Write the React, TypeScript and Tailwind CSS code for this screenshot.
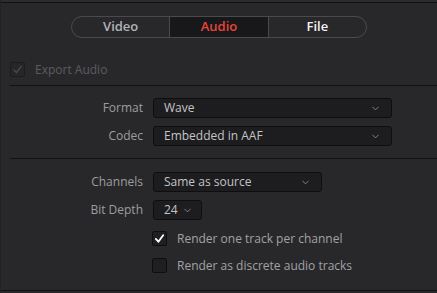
import { ChevronDown } from "lucide-react";

const font = { fontFamily: '"Open Sans", "Liberation Sans", sans-serif' };

function Select({ value, width }: { value: string; width: string }) {
  return (
    <div className={`${width} h-[20px] flex items-center justify-between pl-[10px] pr-[10px] rounded-[3px] border border-[#0e0e10] bg-[#1d1d20] text-[12px] text-[#c4c4c6]`}>
      <span className="leading-none">{value}</span>
      <ChevronDown className="w-[11px] h-[11px] text-[#9a9a9c]" strokeWidth={1.75} />
    </div>
  );
}

function Row({ label, children }: { label: string; children: React.ReactNode }) {
  return (
    <div className="flex items-center">
      <div className="w-[142px] text-right text-[12px] text-[#9d9d9f] leading-none">{label}</div>
      <div className="ml-[10px]">{children}</div>
    </div>
  );
}

function Check({ checked, label, dim }: { checked: boolean; label: string; dim?: boolean }) {
  return (
    <div className="flex items-center">
      <div className={`w-[15px] h-[15px] rounded-[2px] border flex items-center justify-center ${dim ? "border-[#1c1c1f] bg-[#262629]" : "border-[#0e0e10] bg-[#1f1f22]"}`}>
        {checked && (
          <svg viewBox="0 0 12 12" className="w-[11px] h-[11px]">
            <path d="M2 6.5 L4.8 9.5 L10 2.5" fill="none" stroke={dim ? "#4e4e52" : "#ffffff"} strokeWidth={dim ? 1.3 : 2} strokeLinecap="round" strokeLinejoin="round" />
          </svg>
        )}
      </div>
      <span className={`ml-[10px] text-[12px] leading-none ${dim ? "text-[#5c5c60]" : "text-[#a2a2a4]"}`}>{label}</span>
    </div>
  );
}

export default function App() {
  return (
    <div className="w-[437px] h-[293px] bg-[#28282b] overflow-hidden border-l border-[#222225]" style={font}>
      <div className="h-[2px] bg-[#2c2c2f]" />
      <div className="h-px bg-[#111113]" />

      <div className="flex justify-center mt-[13px]">
        <div className="w-[296px] h-[22px] flex rounded-full border border-[#4a4a4e] overflow-hidden text-[13px] font-semibold">
          <div className="flex-1 flex items-center justify-center text-[#b4b4b6]">Video</div>
          <div className="flex-1 flex items-center justify-center bg-[#18181a] text-[#e8453a] border-x border-[#4a4a4e]">Audio</div>
          <div className="flex-1 flex items-center justify-center text-[#f2f2f2]">File</div>
        </div>
      </div>

      <div className="mt-[24px] ml-[9px]">
        <Check checked label="Export Audio" dim />
      </div>

      <div className="mt-[8px] ml-[9px] h-px bg-[#111113]" />

      <div className="mt-[12px] flex flex-col gap-[8px]">
        <Row label="Format"><Select value="Wave" width="w-[239px]" /></Row>
        <Row label="Codec"><Select value="Embedded in AAF" width="w-[239px]" /></Row>
      </div>

      <div className="mt-[12px] ml-[9px] h-px bg-[#111113]" />

      <div className="mt-[13px] flex flex-col gap-[8px]">
        <Row label="Channels"><Select value="Same as source" width="w-[169px]" /></Row>
        <Row label="Bit Depth">
          <div className="w-[49px] h-[20px] flex items-center pl-[10px] gap-[4px] rounded-[3px] border border-[#0e0e10] bg-[#1d1d20] text-[12px] text-[#c4c4c6]">
            <span className="leading-none">24</span>
            <ChevronDown className="w-[11px] h-[11px] text-[#9a9a9c]" strokeWidth={1.75} />
          </div>
        </Row>
      </div>

      <div className="ml-[151px] mt-[11px] flex flex-col gap-[12px]">
        <Check checked label="Render one track per channel" />
        <Check checked={false} label="Render as discrete audio tracks" />
      </div>

      <div className="mt-[17px] h-px bg-[#111113]" />
    </div>
  );
}
